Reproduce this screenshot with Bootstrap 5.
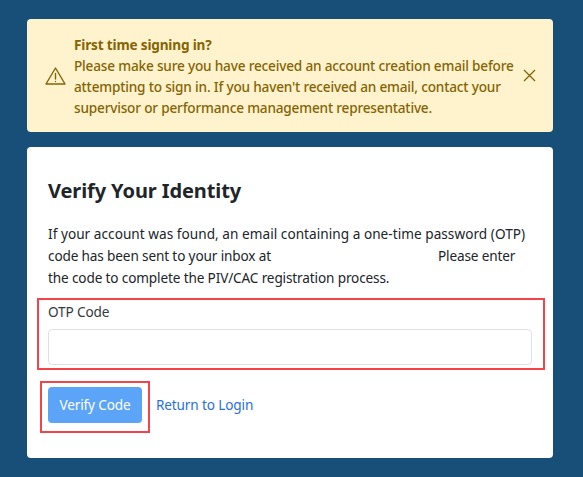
<!DOCTYPE html>
<html lang="en"><head><meta charset="utf-8"><title>Verify Your Identity</title>
<link href="https://cdn.jsdelivr.net/npm/bootstrap@5.3.0/dist/css/bootstrap.min.css" rel="stylesheet">
<style>
html,body{height:100%}
body{background:#174f78;font-family:"Noto Sans","Open Sans",sans-serif;font-size:13.6px;letter-spacing:-.14px;color:#212529;padding:19px 30px 0 27px;overflow:hidden}
.warn-box{background:#fff3cd;color:#856404;border:0;border-radius:4px;height:113px;padding:0 17px 0 18px;margin-bottom:15px;line-height:21px;font-weight:500;letter-spacing:-.18px}
.warn-box svg{flex:none}
.warn-text{width:443px;margin-left:8px}
.warn-close{background:none;border:0;padding:0;margin-left:auto;line-height:0;color:#856404}
.panel-box{background:#fff;border-radius:4px;height:311px;padding:28px 21px 0;border:0}
.panel-box h1{font-size:20px;font-weight:700;line-height:32px;margin:0 0 16px;color:#212529;letter-spacing:-.1px}
.panel-box p{line-height:22px;margin:0 0 13px}
.first-line{letter-spacing:.04px}
.after-gap{margin-left:167px}
.field-wrap,.btn-wrap{position:relative}
.field-wrap label{display:block;line-height:20px;margin:0 0 7px;color:#343a40}
.field-wrap .form-control{height:36px;border:1px solid #dee2e6;border-radius:4px}
.row-actions{margin-top:22px}
.verify-btn{background:#5ba4f8;color:#fff;border:0;border-radius:4px;height:36px;width:94px;font-size:13.6px;letter-spacing:-.14px;padding:0}
.back-link{color:#2a6fe0;text-decoration:none;margin-left:14px}
.annot{position:absolute;border:2px solid #f4434a;pointer-events:none}
.annot-field{left:-11px;right:-13px;top:-4px;bottom:-5px}
.annot-btn{left:-8px;right:-8px;top:-6px;bottom:-10px}
</style></head><body>
<div class="alert warn-box d-flex align-items-center" role="alert">
<svg width="21" height="20" viewBox="0 0 21 20" fill="none" stroke="currentColor" stroke-width="1.4" stroke-linejoin="round" stroke-linecap="round" aria-hidden="true"><path d="M10.5 2 1 18h19z"/><path d="M10.5 7.5v5.5"/><path d="M10.5 15.4v.2"/></svg>
<div class="warn-text"><strong class="fw-bold d-block">First time signing in?</strong>Please make sure you have received an account creation email before attempting to sign in. If you haven't received an email, contact your supervisor or performance management representative.</div>
<button type="button" class="warn-close" aria-label="Close"><svg width="13" height="13" viewBox="0 0 13 13" stroke="currentColor" stroke-width="1.3" aria-hidden="true"><path d="M1 1l11 11M12 1 1 12"/></svg></button>
</div>
<div class="card panel-box">
<h1>Verify Your Identity</h1>
<p><span class="d-block first-line">If your account was found, an email containing a one-time password (OTP)</span><span class="d-block"><span>code has been sent to your inbox at</span><span class="after-gap">Please enter</span></span><span class="d-block">the code to complete the PIV/CAC registration process.</span></p>
<div class="field-wrap"><label for="otp">OTP Code</label><input id="otp" class="form-control" type="text"><span class="annot annot-field"></span></div>
<div class="d-flex align-items-center row-actions"><div class="btn-wrap"><button type="button" class="btn verify-btn">Verify Code</button><span class="annot annot-btn"></span></div><a href="#" class="back-link">Return to Login</a></div>
</div>
<script src="https://cdn.jsdelivr.net/npm/bootstrap@5.3.0/dist/js/bootstrap.bundle.min.js"></script>
</body></html>
